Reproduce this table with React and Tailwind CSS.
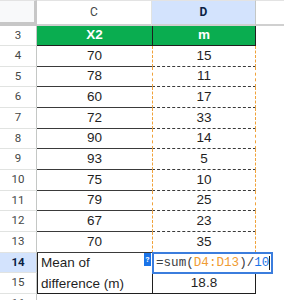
import React from "react";

const rows = [
  { n: 4, c: "70", d: "15" },
  { n: 5, c: "78", d: "11" },
  { n: 6, c: "60", d: "17" },
  { n: 7, c: "72", d: "33" },
  { n: 8, c: "90", d: "14" },
  { n: 9, c: "93", d: "5" },
  { n: 10, c: "75", d: "10" },
  { n: 11, c: "79", d: "25" },
  { n: 12, c: "67", d: "23" },
  { n: 13, c: "70", d: "35" },
];

const rh =
  "flex items-center justify-center border-r border-b border-r-[#c4c7c5] border-b-[#e1e3e1] text-[11.5px] text-[#444746] font-['Roboto',sans-serif]";
const cell = "flex items-center justify-center text-[13.5px] text-[#1f1f1f] font-['Liberation_Sans',Arial,sans-serif]";

export default function App() {
  return (
    <div className="w-[284px] h-[300px] overflow-hidden bg-white">
      <div className="grid grid-cols-[37px_115px_104px_1fr] grid-rows-[26px_20px_21px_20px_21px_21px_20px_21px_21px_20px_21px_21px_20px_21px_21px]">
        {/* header row */}
        <div className="bg-[#f8f9fa] border-t border-t-[#e3e3e3] border-r-[3px] border-b-4 border-r-[#c7c7c7] border-b-[#c7c7c7]" />
        <div className="flex items-center justify-center border-t border-t-[#e3e3e3] border-r border-r-[#e1e3e1] border-b-2 border-b-[#d0d0d0] text-[12px] text-[#444746] font-['Roboto',sans-serif] pb-[2px]">
          C
        </div>
        <div className="flex items-center justify-center bg-[#d3e3fd] border-t border-t-[#e3e3e3] border-r border-r-[#c4c7c5] border-b-2 border-b-[#d0d0d0] text-[12px] font-bold text-[#0b1f44] font-['Roboto',sans-serif] pb-[2px]">
          D
        </div>
        <div className="border-t border-t-[#e3e3e3] border-b-2 border-b-[#d0d0d0]" />

        {/* row 3 */}
        <div className={rh}>3</div>
        <div className="flex items-center justify-center bg-[#0aad50] border-b border-b-[#1f1f1f] text-white font-bold text-[13.5px] font-['Liberation_Sans',Arial,sans-serif]">
          X2
        </div>
        <div className="flex items-center justify-center bg-[#0aad50] border-b border-l border-r border-[#1f1f1f] text-white font-bold text-[13.5px] font-['Liberation_Sans',Arial,sans-serif]">
          m
        </div>
        <div />

        {rows.map((r) => (
          <React.Fragment key={r.n}>
            <div className={rh}>{r.n}</div>
            <div className={`${cell} border-b border-b-[#3a3a3a]`}>{r.c}</div>
            <div
              className={`${cell} border-b border-b-[#3a3a3a] border-l border-r border-dashed border-l-[#f0a23a] border-r-[#f0a23a]`}
            >
              {r.d}
            </div>
            <div />
          </React.Fragment>
        ))}

        {/* row 14 */}
        <div className="flex items-center justify-center border-r border-b border-r-[#c4c7c5] border-b-[#e1e3e1] bg-[#d3e3fd] text-[11.5px] font-bold text-[#0b1f44] font-['Roboto',sans-serif]">
          14
        </div>
        <div className="row-span-2 flex flex-col justify-center pl-[3px] border-l border-b border-[#1f1f1f] text-[13.5px] leading-[21px] text-[#1f1f1f] font-['Liberation_Sans',Arial,sans-serif]">
          <span>Mean of</span>
          <span>difference (m)</span>
        </div>
        <div className="relative">
          <div className="absolute left-0 top-[-1px] h-[22px] w-[121px] bg-white border-2 border-[#3b7ddd] flex items-center pl-[2px] text-[12.6px] font-['Liberation_Mono',monospace] whitespace-nowrap z-10">
            <span className="text-[#3c4043]">=sum(</span>
            <span className="text-[#f09c33]">D4:D13</span>
            <span className="text-[#3c4043]">)/</span>
            <span className="text-[#1a73e8]">10</span>
            <span className="inline-block w-px h-[14px] bg-[#1f1f1f]" />
          </div>
          <div className="absolute left-[-8px] top-0 w-[7px] h-[13px] bg-[#1a73e8] text-white text-[8px] font-bold leading-[13px] text-center font-['Roboto',sans-serif] z-20">
            ?
          </div>
        </div>
        <div />

        {/* row 15 */}
        <div className={rh}>15</div>
        <div className={`${cell} border-l border-r border-b border-[#1f1f1f]`}>18.8</div>
        <div />

        {/* row 16 */}
        <div className={rh}>16</div>
        <div />
        <div />
        <div />
      </div>
    </div>
  );
}
